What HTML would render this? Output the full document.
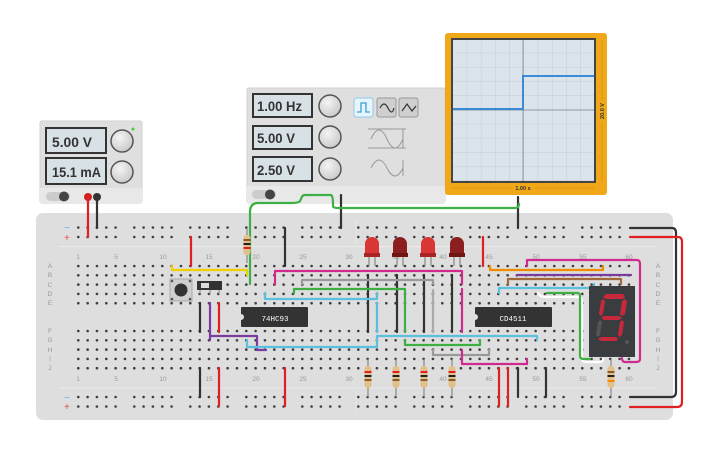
<!DOCTYPE html>
<html><head><meta charset="utf-8">
<style>
html,body{margin:0;padding:0;background:#fff;}
body{width:725px;height:453px;overflow:hidden;font-family:"Liberation Sans",sans-serif;}
</style></head><body>
<svg width="725" height="453" viewBox="0 0 725 453" xmlns="http://www.w3.org/2000/svg" font-family="Liberation Sans, sans-serif">
<defs>
<pattern id="mh" x="73.6" y="0" width="9.333" height="453" patternUnits="userSpaceOnUse">
<g fill="#3c3c3c">
<circle cx="4.7" cy="266" r="1.3"/><circle cx="4.7" cy="275.3" r="1.3"/><circle cx="4.7" cy="284.6" r="1.3"/><circle cx="4.7" cy="293.9" r="1.3"/><circle cx="4.7" cy="303.2" r="1.3"/>
<circle cx="4.7" cy="331" r="1.3"/><circle cx="4.7" cy="340.3" r="1.3"/><circle cx="4.7" cy="349.6" r="1.3"/><circle cx="4.7" cy="358.9" r="1.3"/><circle cx="4.7" cy="368.2" r="1.3"/>
</g></pattern>
<pattern id="rh" x="73.6" y="0" width="56" height="453" patternUnits="userSpaceOnUse">
<g fill="#3c3c3c">
<circle cx="4.7" cy="227.5" r="1.3"/><circle cx="14" cy="227.5" r="1.3"/><circle cx="23.3" cy="227.5" r="1.3"/><circle cx="32.7" cy="227.5" r="1.3"/><circle cx="42" cy="227.5" r="1.3"/>
<circle cx="4.7" cy="237" r="1.3"/><circle cx="14" cy="237" r="1.3"/><circle cx="23.3" cy="237" r="1.3"/><circle cx="32.7" cy="237" r="1.3"/><circle cx="42" cy="237" r="1.3"/>
<circle cx="4.7" cy="397" r="1.3"/><circle cx="14" cy="397" r="1.3"/><circle cx="23.3" cy="397" r="1.3"/><circle cx="32.7" cy="397" r="1.3"/><circle cx="42" cy="397" r="1.3"/>
<circle cx="4.7" cy="406.5" r="1.3"/><circle cx="14" cy="406.5" r="1.3"/><circle cx="23.3" cy="406.5" r="1.3"/><circle cx="32.7" cy="406.5" r="1.3"/><circle cx="42" cy="406.5" r="1.3"/>
</g></pattern>
<pattern id="grid" x="453" y="39" width="14.2" height="14.2" patternUnits="userSpaceOnUse">
<path d="M14.2 0V14.2H0" fill="none" stroke="#b9c6cf" stroke-width="0.8"/></pattern>
<radialGradient id="kn" cx="0.4" cy="0.35" r="0.7"><stop offset="0" stop-color="#f4f4f4"/><stop offset="1" stop-color="#c8c8c8"/></radialGradient>
</defs>

<!-- breadboard -->
<rect x="36" y="213" width="637" height="207" rx="7" fill="#dedede"/>
<line x1="58" y1="246.5" x2="655" y2="246.5" stroke="#eaeaea" stroke-width="1"/>
<line x1="58" y1="388" x2="655" y2="388" stroke="#eaeaea" stroke-width="1"/>
<line x1="356" y1="220" x2="356" y2="244" stroke="#e8e8e8"/>
<line x1="356" y1="390" x2="356" y2="414" stroke="#e8e8e8"/>
<rect x="73" y="220" width="560" height="195" fill="url(#rh)"/>
<rect x="73" y="255" width="561" height="120" fill="url(#mh)"/>
<g fill="#68a8e0" font-size="10"><text x="64" y="231">−</text><text x="64" y="401">−</text></g>
<g fill="#e05050" font-size="10"><text x="64" y="241">+</text><text x="64" y="410">+</text></g>
<g fill="#999" font-size="6.5" text-anchor="middle">
<text x="78" y="259">1</text><text x="116" y="259">5</text><text x="163" y="259">10</text><text x="209" y="259">15</text><text x="256" y="259">20</text><text x="303" y="259">25</text><text x="349" y="259">30</text><text x="396" y="259">35</text><text x="443" y="259">40</text><text x="489" y="259">45</text><text x="536" y="259">50</text><text x="583" y="259">55</text><text x="629" y="259">60</text>
<text x="78" y="381">1</text><text x="116" y="381">5</text><text x="163" y="381">10</text><text x="209" y="381">15</text><text x="256" y="381">20</text><text x="303" y="381">25</text><text x="349" y="381">30</text><text x="396" y="381">35</text><text x="443" y="381">40</text><text x="489" y="381">45</text><text x="536" y="381">50</text><text x="583" y="381">55</text><text x="629" y="381">60</text>
<text x="50" y="268">A</text><text x="50" y="277">B</text><text x="50" y="287">C</text><text x="50" y="296">D</text><text x="50" y="305">E</text><text x="50" y="333">F</text><text x="50" y="342">G</text><text x="50" y="352">H</text><text x="50" y="361">I</text><text x="50" y="370">J</text>
<text x="658" y="268">A</text><text x="658" y="277">B</text><text x="658" y="287">C</text><text x="658" y="296">D</text><text x="658" y="305">E</text><text x="658" y="333">F</text><text x="658" y="342">G</text><text x="658" y="352">H</text><text x="658" y="361">I</text><text x="658" y="370">J</text>
</g>

<!-- power supply -->
<rect x="40" y="121" width="102" height="82" rx="2" fill="#dfdfdf" stroke="#d0d0d0"/>
<rect x="40" y="188" width="102" height="15" fill="#e8e8e8"/>
<rect x="45" y="127" width="62" height="27" fill="#333"/><rect x="47" y="129" width="58" height="23" fill="#d8e1e6"/>
<rect x="45" y="157" width="62" height="28" fill="#333"/><rect x="47" y="159" width="58" height="24" fill="#d8e1e6"/>
<text x="52" y="147" font-size="14" font-weight="bold" fill="#333" textLength="40" lengthAdjust="spacingAndGlyphs">5.00 V</text>
<text x="52" y="177" font-size="14" font-weight="bold" fill="#333" textLength="49" lengthAdjust="spacingAndGlyphs">15.1 mA</text>
<circle cx="122" cy="141" r="11" fill="url(#kn)" stroke="#555" stroke-width="1.5"/>
<circle cx="122" cy="172" r="11" fill="url(#kn)" stroke="#555" stroke-width="1.5"/>
<circle cx="133" cy="129" r="1.5" fill="#4c4"/>
<rect x="46" y="192" width="24" height="9" rx="4.5" fill="#ccc"/><circle cx="64" cy="196.5" r="5" fill="#444"/>
<circle cx="88" cy="197" r="4" fill="#c22"/><circle cx="97" cy="197" r="4" fill="#333"/>

<!-- function generator -->
<rect x="247" y="88" width="198" height="115" rx="2" fill="#dfdfdf" stroke="#d0d0d0"/>
<rect x="247" y="186" width="198" height="17" fill="#e8e8e8"/>
<g fill="#333"><rect x="252" y="93" width="61" height="25"/><rect x="252" y="125" width="61" height="25"/><rect x="252" y="156" width="61" height="26"/></g>
<g fill="#d8e1e6"><rect x="254" y="95" width="57" height="21"/><rect x="254" y="127" width="57" height="21"/><rect x="254" y="158" width="57" height="22"/></g>
<g font-size="14" font-weight="bold" fill="#333"><text x="257" y="111" textLength="45" lengthAdjust="spacingAndGlyphs">1.00 Hz</text><text x="257" y="143" textLength="38" lengthAdjust="spacingAndGlyphs">5.00 V</text><text x="257" y="175" textLength="38" lengthAdjust="spacingAndGlyphs">2.50 V</text></g>
<g fill="url(#kn)" stroke="#555" stroke-width="1.5"><circle cx="330" cy="106" r="11"/><circle cx="330" cy="137" r="11"/><circle cx="330" cy="169" r="11"/></g>
<rect x="354" y="98" width="19" height="19" rx="2" fill="#e8f4fb" stroke="#8cc8e8"/>
<path d="M357 112h4v-9h5v9h4" fill="none" stroke="#3aa0d8" stroke-width="1.3"/>
<rect x="377" y="98" width="19" height="19" rx="2" fill="#cfcfcf" stroke="#999"/>
<path d="M380 108q4-8 8 0t6 0" fill="none" stroke="#333" stroke-width="1.2"/>
<rect x="399" y="98" width="19" height="19" rx="2" fill="#cfcfcf" stroke="#999"/>
<path d="M402 111l5-7 5 7 4-5" fill="none" stroke="#333" stroke-width="1.2"/>
<path d="M368 129h38M368 148h38M403 129v19M371 139q8-18 16 0t16 0" fill="none" stroke="#999" stroke-width="1"/>
<path d="M371 168q8-16 16 0t16 0M403 160v16" fill="none" stroke="#999" stroke-width="1"/>
<rect x="252" y="190" width="24" height="9" rx="4.5" fill="#ccc"/><circle cx="270" cy="194.5" r="5" fill="#444"/>

<!-- oscilloscope -->
<rect x="445" y="33" width="162" height="162" rx="3" fill="#f0a818"/>
<rect x="451" y="38" width="145" height="145" fill="#444"/>
<rect x="453" y="40" width="141" height="141" fill="#dbe4ea"/>
<rect x="453" y="40" width="141" height="141" fill="url(#grid)"/>
<line x1="523" y1="40" x2="523" y2="181" stroke="#8a9aa5"/>
<line x1="453" y1="110" x2="594" y2="110" stroke="#8a9aa5"/>
<path d="M453 109H523V76H594" fill="none" stroke="#3a8ad8" stroke-width="2"/>
<line x1="453" y1="188" x2="594" y2="188" stroke="#c98a10" stroke-width="0.6"/>
<line x1="602" y1="40" x2="602" y2="181" stroke="#c98a10" stroke-width="0.6"/>
<rect x="513" y="184" width="22" height="7" fill="#f0a818"/>
<text x="523" y="190" font-size="5.5" fill="#333" text-anchor="middle" font-weight="bold">1.00 s</text>
<rect x="598" y="100" width="8" height="22" fill="#f0a818"/>
<text x="604" y="111" font-size="5.5" fill="#333" text-anchor="middle" font-weight="bold" transform="rotate(-90 604 111)">20.0 V</text>

<!-- wires -->
<g fill="none" stroke-width="2.2" stroke-linecap="round" stroke-linejoin="round">
<path d="M88 197V237" stroke="#e02020"/>
<path d="M97 197V228" stroke="#333"/>
<path d="M341 195V228" stroke="#333"/>
<path d="M518 197V228" stroke="#333"/>
<path d="M331 195H305Q302 195 301 199L300 201Q299 203 290 203H258Q250 203 250 212V284" stroke="#3cb043"/>
<path d="M331 195Q333 196 333 203V206Q333 208 338 208H515Q519 208 519 204" stroke="#3cb043"/>
<path d="M630 228H672Q676 228 676 233V392Q676 397 671 397H630" stroke="#333"/>
<path d="M630 237H678Q682 237 682 242V402Q682 407 677 407H630" stroke="#e02020"/>
<path d="M191 237V266M219 303V332M219 368V406M285 368V406M483 237V266M499 368V406M508 368V406" stroke="#e02020"/>
<path d="M285 228V266M200 303V332M200 368V397M368 275V332M397 275V332M424 275V332M452 275V332M518 368V397M546 368V397" stroke="#333"/>
<path d="M172 266V270H247V275" stroke="#f0d000"/>
<path d="M275 284V271H462V284" stroke="#d02a8e"/>
<path d="M302 284V280H433V284" stroke="#999"/>
<path d="M433 290V332" stroke="#aaa"/>
<path d="M294 293V289H405V332" stroke="#3cb043"/>
<path d="M265 293V299H377V293M377 303V332" stroke="#5bc0de"/>
<path d="M462 289V332" stroke="#d02a8e"/>
<path d="M210 303V340M210 340V336H257V350H266" stroke="#7a3a9e"/>
<path d="M247 340V347H377V340M377 340V336H537V340" stroke="#5bc0de"/>
<path d="M405 340V345H480V340" stroke="#3cb043"/>
<path d="M433 350V355H489V350" stroke="#999"/>
<path d="M462 350V364H527V359" stroke="#d02a8e"/>
<path d="M490 266V270H603V266" stroke="#f08a00"/>
<path d="M517 275H631" stroke="#7a3a9e"/>
<path d="M527 266V260H637Q640 260 640 264V359Q640 362 636 362H625Q622 362 622 358" stroke="#d02a8e"/>
<path d="M508 284V279H621V284" stroke="#a06a3a"/>
<path d="M499 293V288H594V284" stroke="#5bc0de"/>
<path d="M538 293Q540 297 546 297H578Q582 297 582 302V357Q582 362 586 362H600Q603 362 603 359" stroke="#fff"/>
<path d="M547 293H578Q580 293 580 297V356Q580 359 584 359H590" stroke="#3cb043"/>
</g>

<!-- resistors -->
<g>
<g transform="translate(247 228)"><line x1="0" y1="0" x2="0" y2="35" stroke="#888" stroke-width="1.2"/><rect x="-3.5" y="7" width="7" height="20" rx="3" fill="#e2c08a"/><rect x="-3.5" y="11" width="7" height="2" fill="#8a5a2a"/><rect x="-3.5" y="15" width="7" height="2" fill="#222"/><rect x="-3.5" y="19" width="7" height="2" fill="#e02020"/></g>
<g transform="translate(368 359)"><line x1="0" y1="0" x2="0" y2="38" stroke="#888" stroke-width="1.2"/><rect x="-3.5" y="7" width="7" height="22" rx="3" fill="#e2c08a"/><rect x="-3.5" y="12" width="7" height="2" fill="#e02020"/><rect x="-3.5" y="16" width="7" height="2" fill="#222"/><rect x="-3.5" y="20" width="7" height="2" fill="#8a5a2a"/></g>
<g transform="translate(396 359)"><line x1="0" y1="0" x2="0" y2="38" stroke="#888" stroke-width="1.2"/><rect x="-3.5" y="7" width="7" height="22" rx="3" fill="#e2c08a"/><rect x="-3.5" y="12" width="7" height="2" fill="#e02020"/><rect x="-3.5" y="16" width="7" height="2" fill="#222"/><rect x="-3.5" y="20" width="7" height="2" fill="#8a5a2a"/></g>
<g transform="translate(424 359)"><line x1="0" y1="0" x2="0" y2="38" stroke="#888" stroke-width="1.2"/><rect x="-3.5" y="7" width="7" height="22" rx="3" fill="#e2c08a"/><rect x="-3.5" y="12" width="7" height="2" fill="#e02020"/><rect x="-3.5" y="16" width="7" height="2" fill="#222"/><rect x="-3.5" y="20" width="7" height="2" fill="#8a5a2a"/></g>
<g transform="translate(452 359)"><line x1="0" y1="0" x2="0" y2="38" stroke="#888" stroke-width="1.2"/><rect x="-3.5" y="7" width="7" height="22" rx="3" fill="#e2c08a"/><rect x="-3.5" y="12" width="7" height="2" fill="#e02020"/><rect x="-3.5" y="16" width="7" height="2" fill="#222"/><rect x="-3.5" y="20" width="7" height="2" fill="#8a5a2a"/></g>
<g transform="translate(611 359)"><line x1="0" y1="0" x2="0" y2="38" stroke="#888" stroke-width="1.2"/><rect x="-3.5" y="7" width="7" height="22" rx="3" fill="#e2c08a"/><rect x="-3.5" y="12" width="7" height="2" fill="#8a5a2a"/><rect x="-3.5" y="16" width="7" height="2" fill="#222"/><rect x="-3.5" y="21" width="7" height="2" fill="#f08a00"/></g>
</g>

<!-- LEDs -->
<g stroke="#888" stroke-width="1.2"><path d="M369 255V266M375 255V266M397 255V266M403 255V266M425 255V266M431 255V266M454 255V266M460 255V266"/></g>
<g>
<path d="M365 255V244a7 7 0 0 1 14 0V255z" fill="#d93636"/><rect x="364" y="253" width="16" height="4" fill="#a82525"/>
<path d="M393 255V244a7 7 0 0 1 14 0V255z" fill="#8b1e1e"/><rect x="392" y="253" width="16" height="4" fill="#6e1515"/>
<path d="M421 255V244a7 7 0 0 1 14 0V255z" fill="#d93636"/><rect x="420" y="253" width="16" height="4" fill="#a82525"/>
<path d="M450 255V244a7 7 0 0 1 14 0V255z" fill="#8b1e1e"/><rect x="449" y="253" width="16" height="4" fill="#6e1515"/>
</g>

<!-- push button & switch -->
<rect x="170" y="279" width="22" height="22" fill="#cfcfcf" stroke="#aaa"/>
<circle cx="181" cy="290" r="6.5" fill="#333"/>
<g fill="#555"><circle cx="172" cy="281" r="1.3"/><circle cx="190" cy="281" r="1.3"/><circle cx="172" cy="299" r="1.3"/><circle cx="190" cy="299" r="1.3"/></g>
<rect x="197" y="281" width="25" height="9" fill="#333"/><rect x="201" y="283" width="8" height="5" fill="#ddd"/>
<g stroke="#888"><path d="M200 290V294M210 290V294M219 290V294"/></g>

<!-- chips -->
<rect x="241" y="307" width="67" height="20" rx="1" fill="#333"/>
<path d="M241 314a3 3 0 0 1 0 6" fill="#dedede"/>
<text x="275" y="321" font-size="7.5" fill="#fff" text-anchor="middle" font-family="Liberation Mono, monospace">74HC93</text>
<rect x="475" y="307" width="77" height="20" rx="1" fill="#333"/>
<path d="M475 314a3 3 0 0 1 0 6" fill="#dedede"/>
<text x="513" y="321" font-size="7.5" fill="#fff" text-anchor="middle" font-family="Liberation Mono, monospace">CD4511</text>

<!-- 7-seg -->
<rect x="589" y="286" width="46" height="71" fill="#3a3d40"/>
<g fill="#c8283c">
<path d="M603 297l3-3h17l2 3-2 2h-17z"/>
<path d="M625 299l2 2-2 13-3 2-2-2 2-13z"/>
<path d="M603 299l2 2-2 13-2 2-2-2 2-13z"/>
<path d="M601 318l3-2h15l3 2-3 2h-15z"/>
<path d="M622 320l2 2-2 13-2 2-2-2 2-13z"/>
<path d="M598 339l3-2h15l2 2-2 2h-15z"/>
</g>
<path d="M600 320l2 2-2 13-2 2-2-2 2-13z" fill="#555"/>
<circle cx="627" cy="342" r="2" fill="#555"/>
</svg>
</body></html>
